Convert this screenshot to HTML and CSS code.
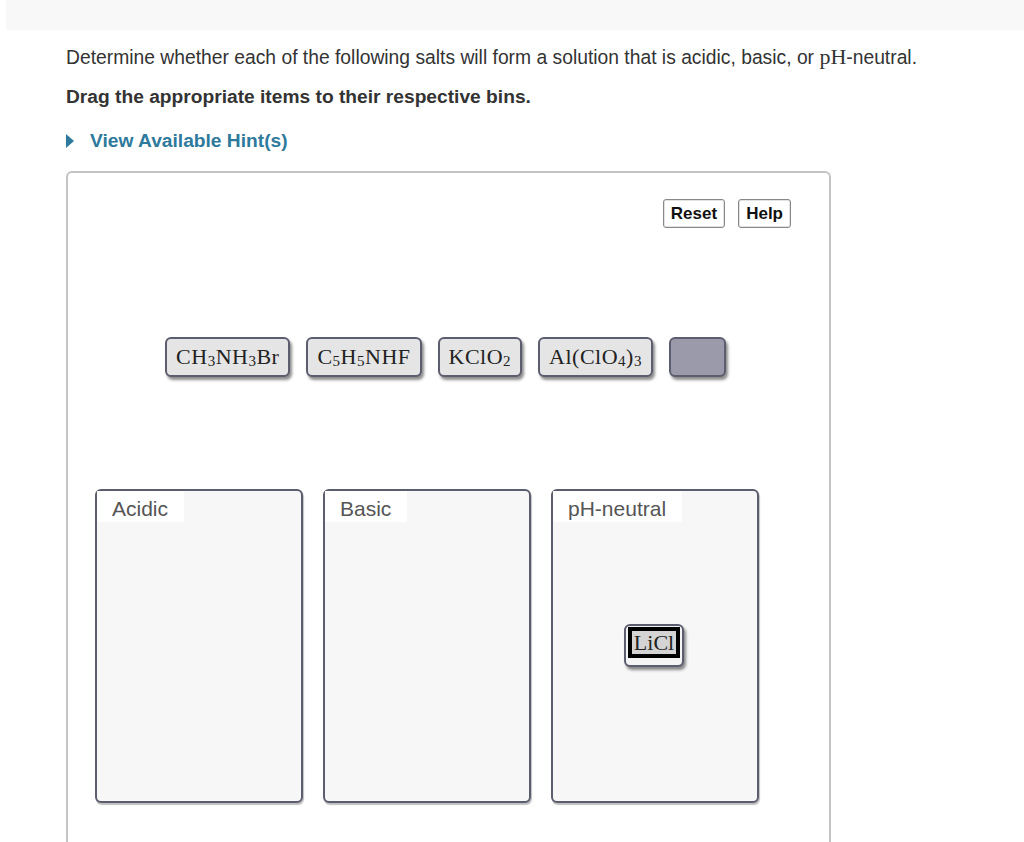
FILE: index.html
```html
<!DOCTYPE html>
<html>
<head>
<meta charset="utf-8">
<link rel="stylesheet" href="styles.css">
</head>
<body>
<div class="topband"></div>
<div class="content">
  <p class="prompt">Determine whether each of the following salts will form a solution that is acidic, basic, or <span class="math">pH</span>-neutral.</p>
  <p class="instr">Drag the appropriate items to their respective bins.</p>
  <div class="hint"><span class="tri"></span>View Available Hint(s)</div>
  <div class="panel">
    <div class="btnrow">
      <button class="btn">Reset</button>
      <button class="btn">Help</button>
    </div>
    <div class="tokens">
      <div class="token">CH<sub>3</sub>NH<sub>3</sub>Br</div>
      <div class="token">C<sub>5</sub>H<sub>5</sub>NHF</div>
      <div class="token">KClO<sub>2</sub></div>
      <div class="token">Al(ClO<sub>4</sub>)<sub>3</sub></div>
      <div class="token empty"></div>
    </div>
    <div class="bins">
      <div class="bin"><div class="binlabel">Acidic</div></div>
      <div class="bin"><div class="binlabel">Basic</div></div>
      <div class="bin"><div class="binlabel">pH-neutral</div>
        <div class="placed"><div class="token small"><span class="sel">LiCl</span></div></div>
      </div>
    </div>
  </div>
</div>
</body>
</html>
```
FILE: styles.css
```css
html, body { margin: 0; padding: 0; background: #fff; }
body { font-family: "Liberation Sans", Arial, sans-serif; color: #333; }
.topband { margin-left: 6px; height: 30px; background: #f8f8f8; }
.content { padding-left: 66px; }
.prompt { margin: 16px 0 0 0; font-size: 19.3px; line-height: 24px; }
.math { font-family: "Liberation Serif", "Times New Roman", serif; font-size: 22px; line-height: 1; }
.instr { margin: 15px 0 0 0; font-size: 19.2px; font-weight: bold; line-height: 24px; }
.hint { margin-top: 20px; font-size: 19.2px; font-weight: bold; color: #2e7a9c; line-height: 24px; display: flex; align-items: center; }
.tri { display: inline-block; width: 0; height: 0; border-top: 7px solid transparent; border-bottom: 7px solid transparent; border-left: 8px solid #2e7a9c; margin-right: 16px; }
.panel { margin-top: 18px; width: 761px; height: 680px; border: 2px solid #c4c4c4; border-radius: 6px; }
.btnrow { display: flex; justify-content: flex-end; gap: 13px; padding: 26px 38px 0 0; }
.btn { font-family: "Liberation Sans", Arial, sans-serif; font-weight: bold; font-size: 17px; color: #111; background: #fff; border: 1px solid #888; border-radius: 3px; height: 29px; padding: 0 7px; box-shadow: 0 0 0 1px #e2e2e2 inset; }
.tokens { display: flex; justify-content: center; gap: 16px; margin-top: 109px; padding-right: 6px; }
.token { font-family: "Liberation Serif", "Times New Roman", serif; font-size: 22px; letter-spacing: 0.5px; color: #222; background: #e5e5e5; border: 2px solid #5d5d70; border-radius: 6px; height: 36px; padding: 0 9px; display: flex; align-items: center; box-shadow: 2px 3px 3px rgba(0,0,0,0.45); }
.token sub { font-size: 15px; position: relative; top: 4px; vertical-align: baseline; line-height: 0; }
.token.empty { width: 53px; padding: 0; background: #9b9aab; }
.bins { display: flex; gap: 20px; margin-top: 112px; padding-left: 27px; }
.bin { width: 204px; height: 310px; background: #f7f7f7; border: 2px solid #5d5d70; border-radius: 6px; box-shadow: 1px 2px 1px rgba(0,0,0,0.25); display: flex; flex-direction: column; }
.binlabel { align-self: flex-start; background: #fff; color: #555; font-size: 21px; line-height: 26px; padding: 5px 16px 0 15px; }
.placed { display: flex; justify-content: center; margin-top: 102px; padding-right: 2px; }
.token.small { height: 38px; padding: 1px 2px 0 2px; align-items: flex-start; background: #f4f4f4; letter-spacing: 0; }
.sel { background: #d4d4d4; border: 4px solid #000; border-top-width: 4px; padding: 0 2px; line-height: 23px; font-size: 22px; }
```
